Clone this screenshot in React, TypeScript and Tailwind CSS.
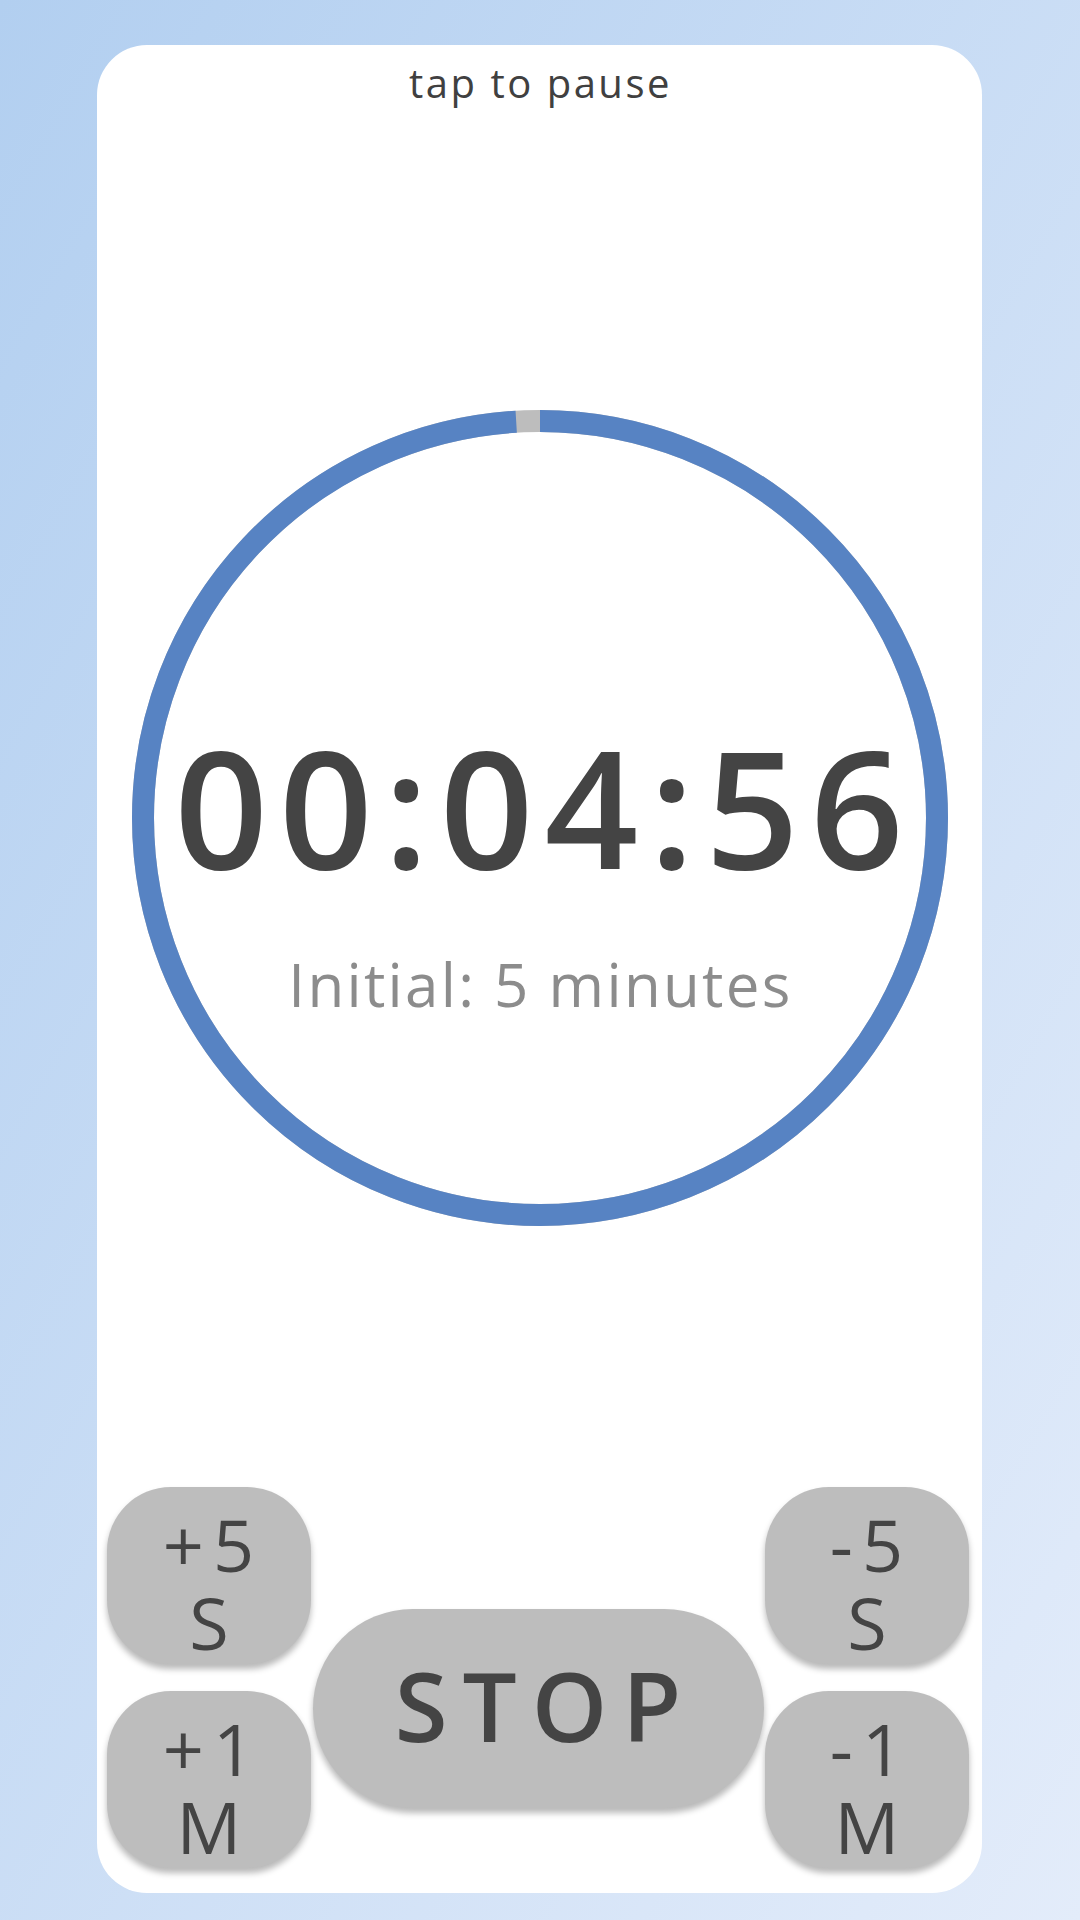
import React from "react";

const FONT = { fontFamily: '"Open Sans", "DejaVu Sans", sans-serif' };

function SmallBtn({ top, bottom }: { top: string; bottom: string }) {
  return (
    <div className="flex h-[177px] w-[204px] flex-col items-center rounded-[64px] bg-[#bdbdbd] pt-[18px] pl-[8px] text-[72px] font-medium text-[#444444] shadow-[0_5px_6px_rgba(0,0,0,0.28)]">
      <span className="block h-[78px] leading-[78px] tracking-[9px]">{top}</span>
      <span className="block h-[78px] leading-[78px] tracking-[8px]">{bottom}</span>
    </div>
  );
}

export default function App() {
  const r = 397;
  const C = 2 * Math.PI * r;
  const remaining = 0.99;
  return (
    <div
      className="flex min-h-[1920px] w-[1080px] bg-linear-to-br from-[#b2cff0] to-[#e3ecfa] pt-[45px] pb-[27px] pl-[97px] pr-[98px]"
      style={FONT}
    >
      <div className="flex h-[1848px] w-[885px] flex-col items-center rounded-[50px] bg-white">
        <div className="pt-[15px] pl-[2px] text-[40px] font-medium leading-[46px] tracking-[2.5px] text-[#404040]">
          tap to pause
        </div>
        <div className="relative mt-[304px] h-[816px] w-[816px]">
          <svg className="absolute inset-0" width="816" height="816" viewBox="0 0 816 816">
            <circle cx="408" cy="408" r={r} fill="none" stroke="#bdbdbd" strokeWidth="22" />
            <circle
              cx="408"
              cy="408"
              r={r}
              fill="none"
              stroke="#5783c3"
              strokeWidth="22"
              strokeDasharray={`${C * remaining} ${C}`}
              transform="rotate(-90 408 408)"
            />
          </svg>
          <div className="relative flex flex-col items-center pt-[314px]">
            <div className="pl-[10px] text-[164px] font-semibold leading-none tracking-[11px] text-[#444444]">
              00:04:56
            </div>
            <div className="mt-[66px] pl-[2px] text-[60px] leading-none tracking-[2.3px] text-[#8c8c8c]">
              Initial: 5 minutes
            </div>
          </div>
        </div>
        <div className="mt-auto flex w-full items-end justify-between pb-[25px] pl-[10px] pr-[13px]">
          <div className="flex flex-col gap-[27px]">
            <SmallBtn top="+5" bottom="S" />
            <SmallBtn top="+1" bottom="M" />
          </div>
          <div className="mb-[60px] flex h-[199px] w-[451px] items-center justify-center rounded-full bg-[#bdbdbd] pb-[8px] pl-[15px] text-[96px] font-semibold leading-none tracking-[15px] text-[#444444] shadow-[0_5px_6px_rgba(0,0,0,0.28)]">
            STOP
          </div>
          <div className="flex flex-col gap-[27px]">
            <SmallBtn top="-5" bottom="S" />
            <SmallBtn top="-1" bottom="M" />
          </div>
        </div>
      </div>
    </div>
  );
}
